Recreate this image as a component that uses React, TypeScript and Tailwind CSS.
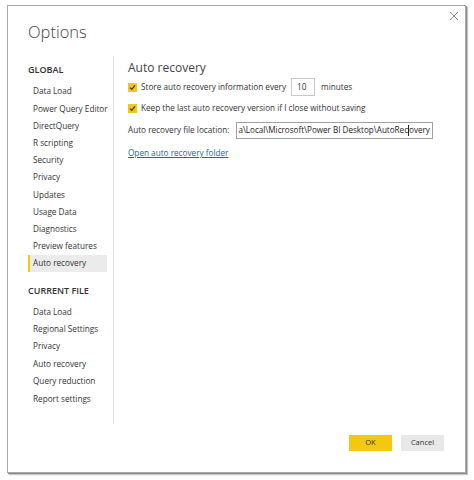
import React from "react";

const globalItems = [
  "Data Load",
  "Power Query Editor",
  "DirectQuery",
  "R scripting",
  "Security",
  "Privacy",
  "Updates",
  "Usage Data",
  "Diagnostics",
  "Preview features",
  "Auto recovery",
];
const fileItems = [
  "Data Load",
  "Regional Settings",
  "Privacy",
  "Auto recovery",
  "Query reduction",
  "Report settings",
];

function Check() {
  return (
    <span className="flex h-[9px] w-[9px] shrink-0 items-center justify-center bg-[#f2c811]">
      <svg width="7" height="7" viewBox="0 0 7 7">
        <path d="M1 3.6 L2.8 5.3 L6 1.4" fill="none" stroke="#3a3a3a" strokeWidth="1.3" />
      </svg>
    </span>
  );
}

export default function App() {
  return (
    <div
      className="relative h-[480px] w-[474px] overflow-hidden bg-white text-[#333333]"
      style={{ fontFamily: '"Open Sans", "Noto Sans", sans-serif' }}
    >
      <div className="relative ml-[7px] mt-[5px] flex h-[468px] w-[459px] flex-col border border-[#a8a8a8] bg-white shadow-[1px_1px_0_#8c8c8c,2px_2px_1px_#c8c8c8]">
        <div className="absolute right-[6px] top-[5px]">
          <svg width="10" height="10" viewBox="0 0 10 10">
            <path d="M1 1 L9 9 M9 1 L1 9" stroke="#8a8a8a" strokeWidth="1" />
          </svg>
        </div>
        <div className="ml-[20px] mt-[12px] h-[28px] text-[16.5px] font-light leading-[28px] text-[#444444]">
          Options
        </div>
        <div className="mt-[10px] flex">
          <div className="h-[368px] w-[106px] shrink-0 border-r border-[#e3e3e3] pl-[20px]">
            <div className="mt-[6px] h-[16px] text-[9px] font-semibold leading-[16px] text-[#333333]">
              GLOBAL
            </div>
            <div className="mt-[5px] flex flex-col">
              {globalItems.map((t, i) => (
                <div
                  key={i}
                  className={
                    i === globalItems.length - 1
                      ? "flex h-[17.2px] w-[79px] items-center border-l-2 border-[#f2c811] bg-[#ebebeb] pl-[3px] text-[8.2px]"
                      : "flex h-[17.2px] items-center pl-[5px] text-[8.2px]"
                  }
                >
                  {t}
                </div>
              ))}
            </div>
            <div className="mt-[11px] h-[16px] text-[9px] font-semibold leading-[16px] text-[#333333]">
              CURRENT FILE
            </div>
            <div className="mt-[4px] flex flex-col">
              {fileItems.map((t, i) => (
                <div key={i} className="flex h-[17.4px] items-center pl-[5px] text-[8.2px]">
                  {t}
                </div>
              ))}
            </div>
          </div>
          <div className="flex flex-col pl-[14px] text-[8.2px]">
            <div className="mt-[2px] h-[20px] text-[12px] leading-[20px] text-[#444444]">
              Auto recovery
            </div>
            <div className="flex h-[18px] items-center">
              <Check />
              <span className="ml-[4px]">Store auto recovery information every</span>
              <span className="ml-[5px] flex h-[18px] w-[24px] items-center border border-[#c8c8c8] pl-[5px]">
                10
              </span>
              <span className="ml-[6px]">minutes</span>
            </div>
            <div className="mt-[4px] flex h-[16px] items-center">
              <Check />
              <span className="ml-[4px]">Keep the last auto recovery version if I close without saving</span>
            </div>
            <div className="mt-[6px] flex h-[17px] items-center">
              <span>Auto recovery file location:</span>
              <span className="ml-[7px] flex h-[17px] w-[197px] items-center overflow-hidden whitespace-nowrap border border-[#a0a0a0] pl-[1px] text-[8.1px] text-[#222222]">
                a\Local\Microsoft\Power BI Desktop\AutoRec
                <span className="inline-block h-[11px] w-px bg-[#222222]" />
                overy
              </span>
            </div>
            <div className="mt-[7px] h-[14px] leading-[14px]">
              <span className="text-[#2a64a8] underline">Open auto recovery folder</span>
            </div>
          </div>
        </div>
        <div className="mt-[11px] flex justify-end gap-[9px] pr-[21px]">
          <div className="flex h-[16px] w-[43px] items-center justify-center bg-[#f2c811] text-[7.5px] text-[#333333]">
            OK
          </div>
          <div className="flex h-[16px] w-[43px] items-center justify-center bg-[#e8e8e8] text-[7.5px] text-[#333333]">
            Cancel
          </div>
        </div>
      </div>
    </div>
  );
}
